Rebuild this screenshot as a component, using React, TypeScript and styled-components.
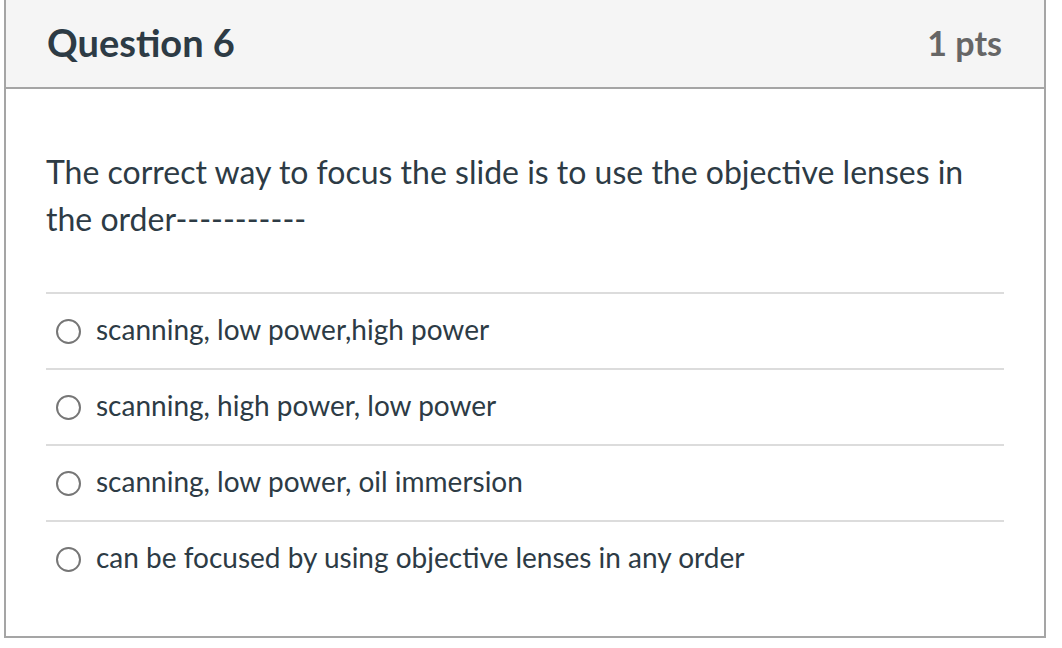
import styled, { createGlobalStyle } from "styled-components"

const GlobalStyle = createGlobalStyle`
    html, body {
        margin: 0;
        padding: 0;
        background: #fff;
    }
    body {
        font-family: Lato, "Open Sans", sans-serif;
        color: #2d3b45;
    }
`

const Card = styled.div`
    width: 1038px;
    margin-left: 4px;
    border: 2px solid #a5a5a5;
    border-top: none;
    background: #fff;
`

const Header = styled.div`
    height: 87px;
    padding: 0 42px 0 41px;
    display: flex;
    align-items: center;
    justify-content: space-between;
    background: #f5f5f5;
    border-bottom: 2px solid #a5a5a5;
`

const Title = styled.h2`
    margin: 0 0 3px;
    font-size: 38px;
    font-weight: 700;
    color: #2d3b45;
`

const Points = styled.span`
    margin-bottom: 3px;
    font-size: 34px;
    font-weight: 700;
    color: #666;
`

const Body = styled.div`
    padding: 59px 40px 40px;
`

const QuestionText = styled.p`
    margin: 0 0 50px;
    font-size: 32px;
    line-height: 47px;
`

const AnswerList = styled.div`
    display: flex;
    flex-direction: column;
`

const Answer = styled.label`
    height: 74px;
    display: flex;
    align-items: center;
    gap: 15px;
    padding-left: 10px;
    border-top: 2px solid #dcdcdc;
    font-size: 28px;
    line-height: 1;
    color: #2d3b45;
    cursor: pointer;
`

const Radio = styled.span`
    width: 25px;
    height: 25px;
    box-sizing: border-box;
    border: 2px solid #767676;
    border-radius: 50%;
    flex-shrink: 0;
`

const AnswerText = styled.span`
    padding-bottom: 5px;
`

const answers = [
    "scanning, low power,high power",
    "scanning, high power, low power",
    "scanning, low power, oil immersion",
    "can be focused by using objective lenses in any order",
]

export default function App() {
    return (<>
        <GlobalStyle />
        <Card>
            <Header>
                <Title>Question 6</Title>
                <Points>1 pts</Points>
            </Header>
            <Body>
                <QuestionText>
                    The correct way to focus the slide is to use the objective lenses in the order-----------
                </QuestionText>
                <AnswerList>
                    {answers.map((a) => (
                        <Answer key={a}>
                            <Radio />
                            <AnswerText>{a}</AnswerText>
                        </Answer>
                    ))}
                </AnswerList>
            </Body>
        </Card>
    </>)
}
